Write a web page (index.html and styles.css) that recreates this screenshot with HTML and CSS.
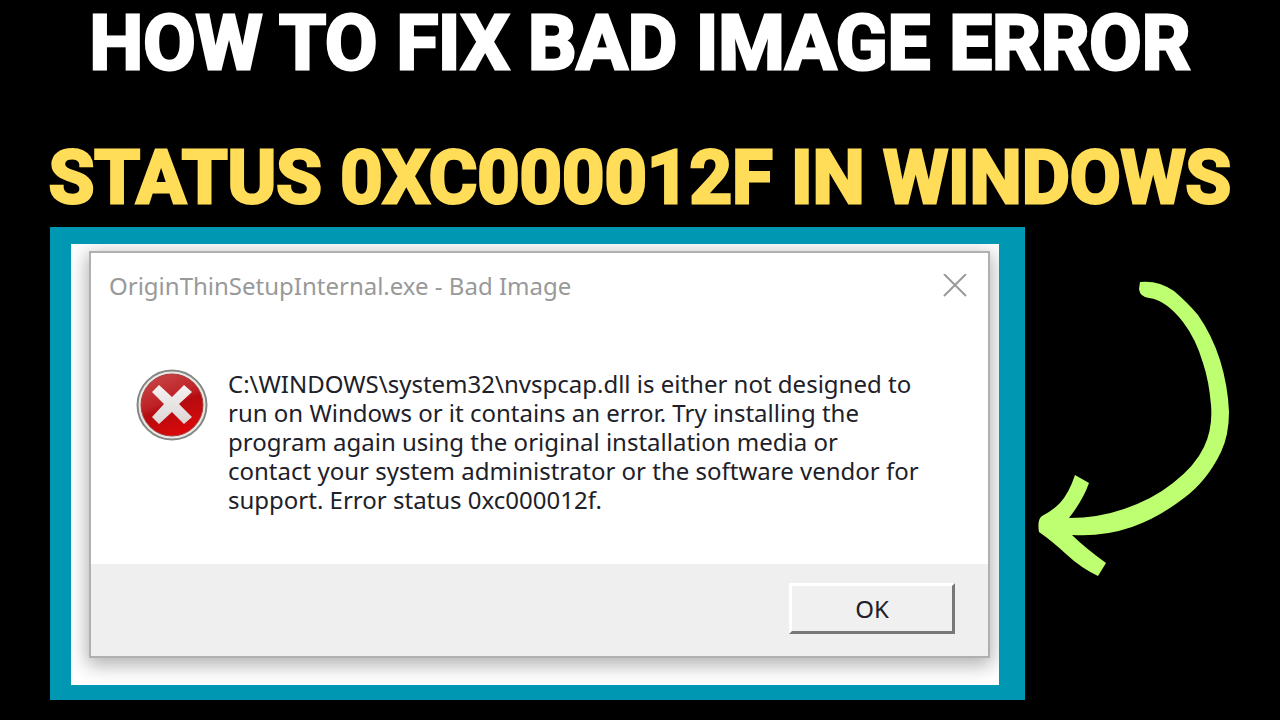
FILE: index.html
```html
<!DOCTYPE html>
<html lang="en">
<head>
<meta charset="utf-8">
<title>How to fix Bad Image error</title>
<link rel="stylesheet" href="styles.css">
</head>
<body>
<h1 class="headline">
  <span class="line line-white">HOW TO FIX BAD IMAGE ERROR</span>
  <span class="line line-yellow">STATUS 0XC000012F IN WINDOWS</span>
</h1>
<main class="stage">
  <div class="frame">
    <div class="backdrop">
      <section class="dialog" role="dialog" aria-labelledby="dialog-title" aria-describedby="dialog-text">
        <header class="titlebar">
          <h2 class="title" id="dialog-title">OriginThinSetupInternal.exe - Bad Image</h2>
          <button class="close" type="button" aria-label="Close">
            <svg width="24" height="24" viewBox="0 0 24 24"><path d="M1 0L23 22M23 0L1 22" stroke="#999" stroke-width="2" fill="none"/></svg>
          </button>
        </header>
        <div class="content">
          <svg class="error-icon" width="72" height="72" viewBox="0 0 72 72" aria-hidden="true">
            <defs>
              <linearGradient id="red" x1="0.2" y1="0" x2="0.6" y2="1">
                <stop offset="0" stop-color="#c94848"/>
                <stop offset="0.45" stop-color="#bd2025"/>
                <stop offset="0.55" stop-color="#b40c10"/>
                <stop offset="1" stop-color="#dc0808"/>
              </linearGradient>
              <linearGradient id="cross" x1="0" y1="0" x2="0" y2="1">
                <stop offset="0" stop-color="#f6f2f2"/>
                <stop offset="1" stop-color="#dcd6d6"/>
              </linearGradient>
            </defs>
            <circle cx="36" cy="36" r="34.500" fill="#e8e8e6" stroke="#858783" stroke-width="2"/>
            <circle cx="36" cy="36" r="31" fill="url(#red)" stroke="#a83a3a" stroke-width="1"/>
            <path d="M23 16L36 28L48 16L56 23L43 35L56 48L48 55L36 43L23 55L16 48L28 35L16 23Z" fill="url(#cross)"/>
          </svg>
          <p class="message" id="dialog-text">C:\WINDOWS\system32\nvspcap.dll is either not designed to<br>run on Windows or it contains an error. Try installing the<br>program again using the original installation media or<br>contact your system administrator or the software vendor for<br>support. Error status 0xc000012f.</p>
        </div>
        <footer class="actions"><button class="ok" type="button">OK</button></footer>
      </section>
    </div>
  </div>
  <svg class="arrow" width="192" height="298" viewBox="1038 280 192 298" aria-hidden="true">
    <path fill="#bdff70" d="M1140 282Q1158 280 1174 291Q1188 303 1198 315Q1212 335 1220 360Q1228 386 1229 412Q1229 435 1221 452Q1207 481 1184 498Q1158 518 1132 527Q1103 537 1072 535Q1084 547 1106 563L1098 576Q1081 568 1066 554Q1052 541 1039 532Q1037 519 1042 516Q1052 511 1060 503Q1069 493 1075 475L1089 483Q1083 500 1069 518Q1098 518 1124 509Q1153 499 1173 483Q1195 466 1204 447Q1213 428 1211 405Q1209 381 1203 363Q1196 339 1183 322Q1166 300 1149 298Q1140 297 1139 289Z"/>
  </svg>
</main>
</body>
</html>
```
FILE: styles.css
```css
* { box-sizing: border-box; }

body {
  margin: 0;
  min-height: 100vh;
  background: #000;
  font-family: "Noto Sans", "Open Sans", sans-serif;
}

.headline {
  margin: 0;
  padding: 10px 0 16px;
  font-family: Roboto, "Liberation Sans", sans-serif;
  font-weight: 700;
  text-align: center;
}

.line {
  display: block;
  line-height: 67px;
  white-space: nowrap;
  -webkit-text-stroke: 3px;
}

.line-white { color: #fff; font-size: 76px; }
.line-yellow { color: #ffdd58; font-size: 74px; margin-top: 67px; }

.stage {
  display: flex;
  padding: 0 50px 20px;
  gap: 13px;
  align-items: flex-start;
}

.frame {
  flex: 1;
  padding: 17px 26px 15px 21px;
  background: #0097b2;
}

.backdrop {
  padding: 7px 9px 27px 18px;
  background: #fff;
  overflow: hidden;
}

.dialog {
  border: 2px solid #b0b0b0;
  background: #fff;
  box-shadow: 0 5px 18px 2px #00000050;
}

.titlebar {
  display: flex;
  justify-content: space-between;
  align-items: center;
  padding: 17px 21px 0 18px;
}

.title {
  margin: 0;
  color: #999;
  font-size: 24px;
  font-weight: 400;
  line-height: 32px;
}

.close {
  display: flex;
  padding: 0;
  border: 0;
  background: none;
}

.content {
  display: flex;
  gap: 20px;
  padding: 67px 20px 50px 45px;
}

.error-icon { flex: none; }

.message {
  margin: 0;
  color: #202028;
  font-size: 24px;
  line-height: 29px;
  white-space: nowrap;
}

.actions {
  display: flex;
  justify-content: flex-end;
  padding: 19px 33px 22px;
  background: #efefef;
}

.ok {
  width: 166px;
  height: 51px;
  border: 3px solid;
  border-color: #fff #777 #777 #fff;
  background: #f0f0f0;
  color: #202028;
  font: 24px "Noto Sans", sans-serif;
}

.arrow {
  flex: none;
  margin-top: 53px;
}
```
